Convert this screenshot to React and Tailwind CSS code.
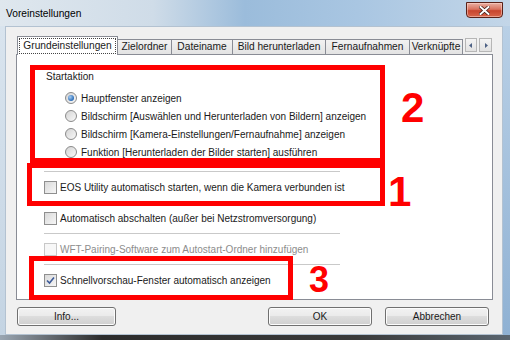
const tabs = [
  { label: 'Zielordner', w: 'w-[54px]' },
  { label: 'Dateiname', w: 'w-[61px]' },
  { label: 'Bild herunterladen', w: 'w-[93px]' },
  { label: 'Fernaufnahmen', w: 'w-[84px]' },
  { label: 'Verknüpfte', w: 'w-[53px]' },
];

const radios = [
  { label: 'Hauptfenster anzeigen', on: true },
  { label: 'Bildschirm [Auswählen und Herunterladen von Bildern] anzeigen' },
  { label: 'Bildschirm [Kamera-Einstellungen/Fernaufnahme] anzeigen' },
  { label: 'Funktion [Herunterladen der Bilder starten] ausführen' },
];

function Radio({ on }) {
  return (
    <span className="w-[12px] h-[12px] rounded-full border border-[#8a8a8a] bg-[linear-gradient(135deg,#d4d4d4,#f8f8f8)] flex items-center justify-center shrink-0">
      {on && (
        <span className="w-[6px] h-[6px] rounded-full bg-[radial-gradient(circle_at_35%_35%,#a6cdf2,#2a6cb8_70%)]" />
      )}
    </span>
  );
}

function Check({ on, disabled }) {
  return (
    <span
      className={
        disabled
          ? 'w-[13px] h-[13px] border border-[#c8c8c8] bg-[#f7f7f7] shrink-0'
          : 'w-[13px] h-[13px] border border-[#8f8f8f] bg-[linear-gradient(135deg,#d9d9d9,#f6f6f6)] shrink-0 flex items-center justify-center'
      }
    >
      {on && (
        <svg width="9" height="9" viewBox="0 0 9 9">
          <path d="M1 4.5 L3.5 7 L8 1.5" fill="none" stroke="#3c5a98" strokeWidth="1.6" />
        </svg>
      )}
    </span>
  );
}

function CheckRow({ label, on, disabled }) {
  return (
    <div className="h-[30px] flex items-center gap-[3px]">
      <Check on={on} disabled={disabled} />
      <span className={disabled ? 'text-[#8d8d8d]' : ''}>{label}</span>
    </div>
  );
}

function Sep() {
  return <div className="w-[296px] h-px bg-[#c9c9c9]" />;
}

function Button({ children, w }) {
  return (
    <button
      className={`${w} h-[19px] rounded-[3px] border border-[#707070] bg-[linear-gradient(#f2f2f2,#ebebeb_45%,#dddddd_50%,#cfcfcf)] text-[10px] leading-none shadow-[inset_0_0_0_1px_#fcfcfc]`}
    >
      {children}
    </button>
  );
}

export default function App() {
  return (
    <div className="w-[510px] h-[340px] overflow-hidden relative flex flex-col font-['Liberation_Sans',Arial,sans-serif] text-[10px] text-[#1a1a1a] bg-[radial-gradient(ellipse_110px_14px_at_62%_90%,rgba(10,20,30,0.85),transparent),radial-gradient(ellipse_120px_16px_at_50%_35%,#5b8cbb,transparent),linear-gradient(to_right,#dfe7ee,#cfdce8_30%,#9bbcdb_48%,#a9c6e2_70%,#c3d6e8)]">
      <div className="h-[26px] flex items-start shrink-0">
        <span className="pl-[6px] pt-[8px] leading-[12px] text-[10.2px] text-black">Voreinstellungen</span>
        <div className="ml-auto mr-[7px] mt-[2px] w-[37px] h-[16px] rounded-b-[4px] border border-[#5a2118] bg-[linear-gradient(#eab0a3,#d9735f_45%,#c8452d_55%,#d8654a)] flex items-center justify-center shadow-[inset_0_0_0_1px_rgba(255,220,210,0.5)]">
          <svg width="11" height="9" viewBox="0 0 11 9">
            <path d="M1.5 1 L9.5 8 M9.5 1 L1.5 8" stroke="#3a1a14" strokeWidth="3.4" strokeLinecap="square" />
            <path d="M1.5 1 L9.5 8 M9.5 1 L1.5 8" stroke="#ffffff" strokeWidth="2" strokeLinecap="square" />
          </svg>
        </div>
      </div>

      <div className="flex flex-1 min-h-0">
        <div className="w-[5px] bg-[linear-gradient(#d9e4ee,#c4d4e3)]" />
        <div className="w-[498px] bg-[#f0f0f0] border border-[#b3c2d1] pl-[10px] pt-[9px] flex flex-col">
          <div className="flex items-end h-[18px] pl-px w-[477px]">
            <div className="relative z-10 w-[101px] h-[19px] -mb-px bg-white border border-b-0 border-[#898c95] p-px">
              <div className="h-full border border-dotted border-[#444] flex items-center justify-center text-[10.2px] leading-none">
                Grundeinstellungen
              </div>
            </div>
            {tabs.map((t) => (
              <div
                key={t.label}
                className={`${t.w} h-[15px] border-t border-r border-[#898c95] bg-[linear-gradient(#f2f2f2,#e3e3e3)] flex items-center justify-center text-[10.2px] leading-none whitespace-nowrap overflow-hidden`}
              >
                {t.label}
              </div>
            ))}
            <div className="ml-auto flex gap-[2px] mb-[2px] mr-px">
              <div className="w-[12px] h-[14px] border border-[#b6b6b6] bg-[linear-gradient(#f4f4f4,#e2e2e2)] flex items-center justify-center">
                <svg width="4" height="5" viewBox="0 0 4 5"><path d="M3 0 L0 2.5 L3 5 Z" fill="#4d6185" /></svg>
              </div>
              <div className="w-[13px] h-[14px] border border-[#b6b6b6] bg-[linear-gradient(#f4f4f4,#e2e2e2)] flex items-center justify-center">
                <svg width="4" height="5" viewBox="0 0 4 5"><path d="M1 0 L4 2.5 L1 5 Z" fill="#4d6185" /></svg>
              </div>
            </div>
          </div>

          <div className="w-[477px] h-[246px] border border-[#898c95] bg-white pl-[27px] pt-[15px]">
            <div className="ml-[2px] leading-[14px]">Startaktion</div>
            <div className="ml-[21px] mt-[5px]">
              {radios.map((r) => (
                <div key={r.label} className="h-[18px] flex items-center gap-[4px]">
                  <Radio on={r.on} />
                  <span>{r.label}</span>
                </div>
              ))}
            </div>
            <div className="mt-[10px]">
              <Sep />
              <CheckRow label="EOS Utility automatisch starten, wenn die Kamera verbunden ist" />
              <Sep />
              <CheckRow label="Automatisch abschalten (außer bei Netzstromversorgung)" />
              <Sep />
              <CheckRow label="WFT-Pairing-Software zum Autostart-Ordner hinzufügen" disabled />
              <Sep />
              <CheckRow label="Schnellvorschau-Fenster automatisch anzeigen" on />
            </div>
          </div>

          <div className="flex mt-[7px]">
            <div className="ml-px">
              <Button w="w-[99px]">Info...</Button>
            </div>
            <div className="ml-auto mr-[13px] flex gap-[13px]">
              <Button w="w-[104px]">OK</Button>
              <Button w="w-[104px]">Abbrechen</Button>
            </div>
          </div>
        </div>
        <div className="w-[7px] bg-[linear-gradient(#b9d0e6,#8fb1d3)]" />
      </div>
      <div className="h-[5px] shrink-0 bg-[linear-gradient(to_right,#9aa6b2,#2c2c2c_20%,#3a3a3a_70%,#5b6670)]" />

      <div className="absolute left-[30px] top-[65px] w-[355px] h-[98px] border-[5px] border-[#ff0000]" />
      <div className="absolute left-[27px] top-[163px] w-[358px] h-[43px] border-[5px] border-[#ff0000]" />
      <div className="absolute left-[29px] top-[256px] w-[264px] h-[44px] border-[5px] border-[#ff0000]" />
      <div className="absolute left-[401px] top-[87px] text-[42px] leading-none font-bold text-[#ff0000]">2</div>
      <div className="absolute left-[388px] top-[171px] text-[42px] leading-none font-bold text-[#ff0000]">1</div>
      <div className="absolute left-[309px] top-[262px] text-[36px] leading-none font-bold text-[#ff0000]">3</div>
    </div>
  );
}
